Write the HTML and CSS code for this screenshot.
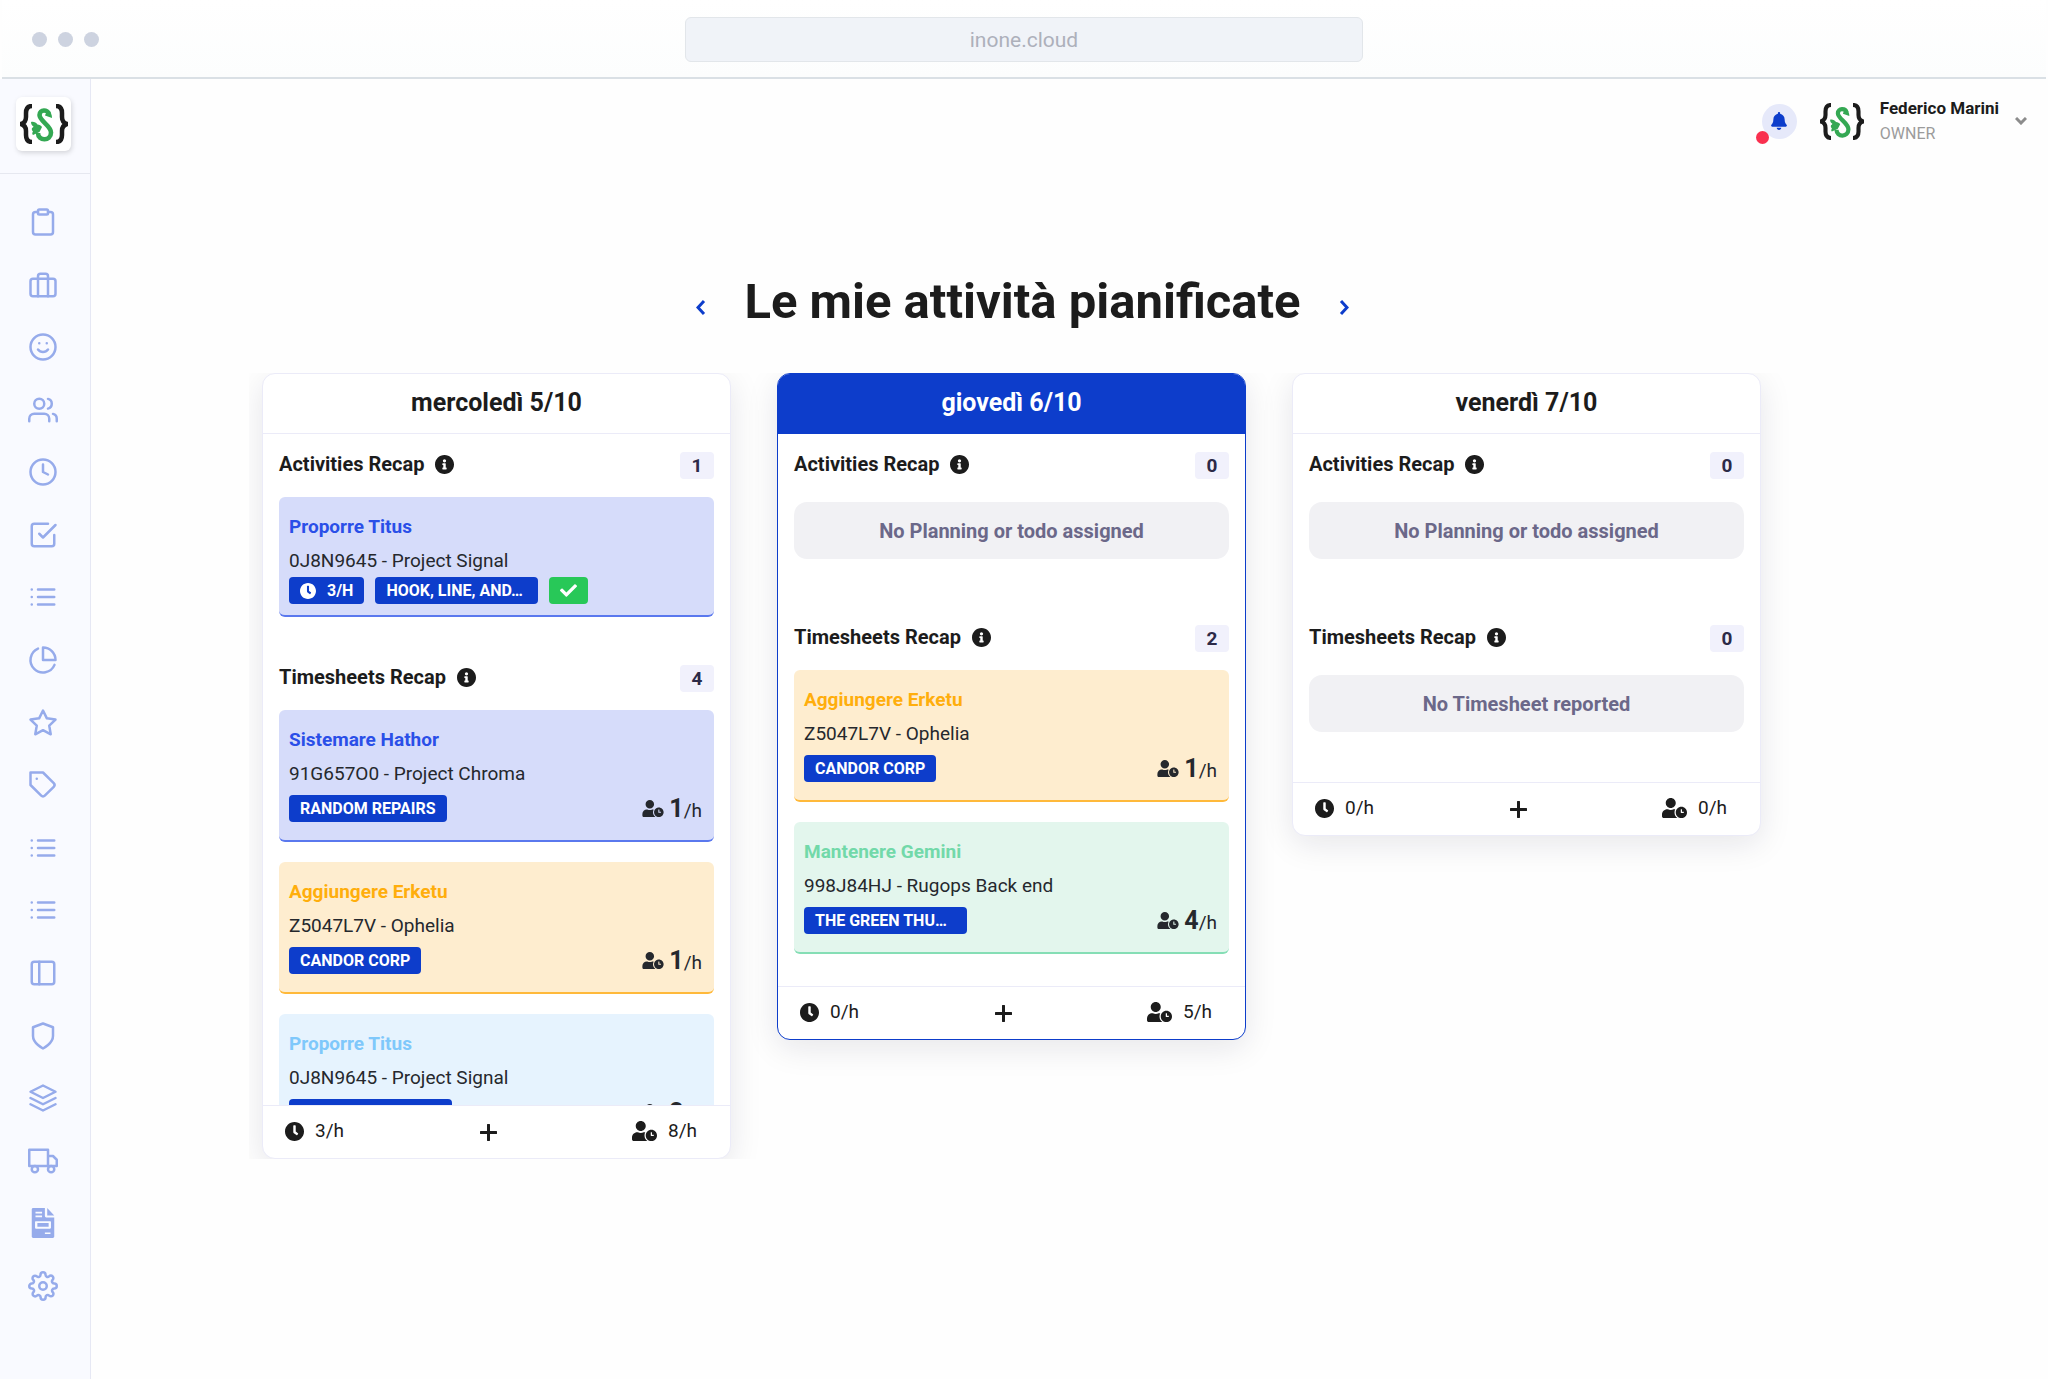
FILE: index.html
```html
<!DOCTYPE html>
<html lang="it">
<head>
    <meta charset="UTF-8">
    <meta name="viewport" content="width=device-width, initial-scale=1.0">
    <title>inone.cloud</title>
    <link rel="stylesheet" href="styles.css">
</head>
<body>
    <!-- Shared icons -->
    <svg class="sprite" aria-hidden="true">
        <symbol id="logo" viewBox="0 0 48 40">
            <g fill="none" stroke="#1c1c1c" stroke-width="4.500">
                <path d="M12 2C8 2 6 4.500 6 9v4c0 4-1.500 6-5 7 3.500 1 5 3 5 7v4c0 4.500 2 7 6 7"/>
                <path d="M36 2c4 0 6 2.500 6 7v4c0 4 1.500 6 5 7-3.500 1-5 3-5 7v4c0 4.500-2 7-6 7"/>
            </g>
            <path d="M29 10c-1-4.500-9.500-5-9.500 1 0 6 11.500 10.500 11.500 17.500 0 9-13 9-13 .5" fill="none" stroke="#34a853" stroke-width="4.600"/>
            <path d="M32 14l-7-2.500c.5-2 2-4 4-4.500 2 1.500 3 4 3 7zM11 18c3-.5 5 .5 6.500 2.500 2 0 3.500 1 4.500 2.500l-2.500 5-6.500 3c-1-1-1-2 0-3.500-1-1-1.500-2-1-3.500 1-.5 1.500-1 1.500-1.500C12 21.500 11 20 11 18z" fill="#34a853"/>
        </symbol>
        <symbol id="list" viewBox="0 0 24 24"><path d="M8 6h13M8 12h13M8 18h13M3 6h.01M3 12h.01M3 18h.01"/></symbol>
        <symbol id="info" viewBox="8 8 496 496"><path d="M256 8C119.043 8 8 119.083 8 256c0 136.997 111.043 248 248 248s248-111.003 248-248C504 119.083 392.957 8 256 8zm0 110c23.196 0 42 18.804 42 42s-18.804 42-42 42-42-18.804-42-42 18.804-42 42-42zm56 254c0 6.627-5.373 12-12 12h-88c-6.627 0-12-5.373-12-12v-24c0-6.627 5.373-12 12-12h12v-64h-12c-6.627 0-12-5.373-12-12v-24c0-6.627 5.373-12 12-12h64c6.627 0 12 5.373 12 12v100h12c6.627 0 12 5.373 12 12v24z"/></symbol>
        <symbol id="clock" viewBox="8 8 496 496"><path d="M256,8C119,8,8,119,8,256S119,504,256,504,504,393,504,256,393,8,256,8Zm92.490,313h0l-20,25a16,16,0,0,1-22.490,2.500h0l-67-49.720a40,40,0,0,1-15-31.230V112a16,16,0,0,1,16-16h32a16,16,0,0,1,16,16V256l58,42.500A16,16,0,0,1,348.490,321Z"/></symbol>
        <symbol id="user-clock" viewBox="0 0 640 512"><path d="M496 224c-79.600 0-144 64.400-144 144s64.400 144 144 144 144-64.400 144-144-64.400-144-144-144zm64 150.300c0 5.300-4.400 9.700-9.700 9.700h-60.600c-5.300 0-9.700-4.400-9.700-9.700v-76.600c0-5.300 4.400-9.700 9.700-9.700h12.600c5.300 0 9.700 4.400 9.700 9.700V352h38.300c5.300 0 9.700 4.400 9.700 9.700v12.600zM320 368c0-27.800 6.700-54.100 18.200-77.500-8-1.500-16.200-2.500-24.600-2.500h-16.700c-22.200 10.200-46.900 16-72.900 16s-50.600-5.800-72.900-16h-16.700C60.200 288 0 348.200 0 422.400V464c0 26.500 21.500 48 48 48h347.100c-45.300-31.900-75.100-84.500-75.100-144zm-96-112c70.700 0 128-57.300 128-128S294.700 0 224 0 96 57.300 96 128s57.300 128 128 128z"/></symbol>
        <symbol id="plus" viewBox="0 0 17 17"><path d="M8.500 1v15M1 8.500h15" stroke="currentColor" stroke-width="3" stroke-linecap="round"/></symbol>
    </svg>

    <div class="browser-bar">
        <div class="dots"><span></span><span></span><span></span></div>
        <input class="address" type="text" value="inone.cloud" aria-label="Address" readonly>
    </div>

    <div class="app">
        <aside class="sidebar">
            <div class="brand">
                <a href="#" class="brand-logo" aria-label="Home"><svg><use href="#logo"/></svg></a>
            </div>
            <nav class="menu">
                <a href="#" aria-label="Clipboard"><svg viewBox="0 0 24 24"><path d="M16 4h2a2 2 0 0 1 2 2v14a2 2 0 0 1-2 2H6a2 2 0 0 1-2-2V6a2 2 0 0 1 2-2h2"/><rect x="8" y="2" width="8" height="4" rx="1"/></svg></a>
                <a href="#" aria-label="Projects"><svg viewBox="0 0 24 24"><rect x="2" y="7" width="20" height="14" rx="2"/><path d="M16 21V5a2 2 0 0 0-2-2h-4a2 2 0 0 0-2 2v16"/></svg></a>
                <a href="#" aria-label="Customers"><svg viewBox="0 0 24 24"><circle cx="12" cy="12" r="10"/><path d="M8 14s1.500 2 4 2 4-2 4-2M9 9h.01M15 9h.01"/></svg></a>
                <a href="#" aria-label="Users"><svg viewBox="0 0 24 24"><path d="M17 21v-2a4 4 0 0 0-4-4H5a4 4 0 0 0-4 4v2"/><circle cx="9" cy="7" r="4"/><path d="M23 21v-2a4 4 0 0 0-3-3.870M16 3.130a4 4 0 0 1 0 7.750"/></svg></a>
                <a href="#" aria-label="Timesheets"><svg viewBox="0 0 24 24"><circle cx="12" cy="12" r="10"/><path d="M12 6v6l4 2"/></svg></a>
                <a href="#" aria-label="Todo"><svg viewBox="0 0 24 24"><path d="M9 11l3 3L22 4"/><path d="M21 12v7a2 2 0 0 1-2 2H5a2 2 0 0 1-2-2V5a2 2 0 0 1 2-2h11"/></svg></a>
                <a href="#" aria-label="List"><svg><use href="#list"/></svg></a>
                <a href="#" aria-label="Reports"><svg viewBox="0 0 24 24"><path d="M21.210 15.890A10 10 0 1 1 8 2.830"/><path d="M22 12A10 10 0 0 0 12 2v10z"/></svg></a>
                <a href="#" aria-label="Favourites"><svg viewBox="0 0 24 24"><path d="M12 2l3.090 6.260L22 9.270l-5 4.870 1.180 6.880L12 17.770l-6.180 3.250L7 14.140 2 9.270l6.910-1.010L12 2z"/></svg></a>
                <a href="#" aria-label="Tags"><svg viewBox="0 0 24 24"><path d="M20.590 13.410l-7.170 7.170a2 2 0 0 1-2.830 0L2 12V2h10l8.590 8.590a2 2 0 0 1 0 2.820zM7 7h.01"/></svg></a>
                <a href="#" aria-label="List"><svg><use href="#list"/></svg></a>
                <a href="#" aria-label="List"><svg><use href="#list"/></svg></a>
                <a href="#" aria-label="Board"><svg viewBox="0 0 24 24"><rect x="3" y="3" width="18" height="18" rx="2"/><path d="M9 3v18"/></svg></a>
                <a href="#" aria-label="Security"><svg viewBox="0 0 24 24"><path d="M12 22s8-4 8-10V5l-8-3-8 3v7c0 6 8 10 8 10z"/></svg></a>
                <a href="#" aria-label="Layers"><svg viewBox="0 0 24 24"><path d="M12 2L2 7l10 5 10-5-10-5zM2 17l10 5 10-5M2 12l10 5 10-5"/></svg></a>
                <a href="#" aria-label="Suppliers"><svg viewBox="0 0 24 24"><path d="M1 3h15v13H1zM16 8h4l3 3v5h-7z"/><circle cx="5.500" cy="18.500" r="2.500"/><circle cx="18.500" cy="18.500" r="2.500"/></svg></a>
                <a href="#" aria-label="Invoices"><svg class="solid" viewBox="0 0 384 512"><path fill-rule="evenodd" d="M24 0h200v136c0 13 11 24 24 24h136v328c0 13-11 24-24 24H24c-13 0-24-11-24-24V24C0 11 11 0 24 0zm40 64v28h112V64H64zm0 64v28h112v-28H64zm8 96c-9 0-16 7-16 16v96c0 9 7 16 16 16h240c9 0 16-7 16-16v-96c0-9-7-16-16-16H72zm24 32h192v64H96v-64zm128 160v28h96v-28h-96zM264 0l120 128H264z"/></svg></a>
                <a href="#" aria-label="Settings"><svg viewBox="0 0 24 24"><circle cx="12" cy="12" r="3"/><path d="M19.400 15a1.650 1.650 0 0 0 .33 1.820l.06.06a2 2 0 0 1 0 2.830 2 2 0 0 1-2.830 0l-.06-.06a1.650 1.650 0 0 0-1.820-.33 1.650 1.650 0 0 0-1 1.510V21a2 2 0 0 1-2 2 2 2 0 0 1-2-2v-.09A1.650 1.650 0 0 0 9 19.400a1.650 1.650 0 0 0-1.820.33l-.06.06a2 2 0 0 1-2.830 0 2 2 0 0 1 0-2.830l.06-.06a1.650 1.650 0 0 0 .33-1.820 1.650 1.650 0 0 0-1.510-1H3a2 2 0 0 1-2-2 2 2 0 0 1 2-2h.09A1.650 1.650 0 0 0 4.600 9a1.650 1.650 0 0 0-.33-1.820l-.06-.06a2 2 0 0 1 0-2.830 2 2 0 0 1 2.830 0l.06.06a1.650 1.650 0 0 0 1.820.33H9a1.650 1.650 0 0 0 1-1.510V3a2 2 0 0 1 2-2 2 2 0 0 1 2 2v.09a1.650 1.650 0 0 0 1 1.510 1.650 1.650 0 0 0 1.820-.33l.06-.06a2 2 0 0 1 2.830 0 2 2 0 0 1 0 2.830l-.06.06a1.650 1.650 0 0 0-.33 1.820V9a1.650 1.650 0 0 0 1.510 1H21a2 2 0 0 1 2 2 2 2 0 0 1-2 2h-.09a1.650 1.650 0 0 0-1.510 1z"/></svg></a>
            </nav>
        </aside>

        <main class="main">
            <header class="topbar">
                <button class="bell" aria-label="Notifications">
                    <svg viewBox="0 0 448 512"><path d="M224 512c35.320 0 63.970-28.650 63.970-64H160.030c0 35.350 28.650 64 63.970 64zm215.390-149.710c-19.320-20.760-55.470-51.990-55.470-154.290 0-77.700-54.480-139.900-127.940-155.160V32c0-17.670-14.320-32-31.980-32s-31.980 14.330-31.980 32v20.840C118.560 68.100 64.080 130.300 64.080 208c0 102.300-36.150 133.530-55.470 154.290-6 6.450-8.660 14.160-8.610 21.710.11 16.400 12.980 32 32.100 32h383.800c19.120 0 32-15.600 32.100-32 .05-7.550-2.610-15.270-8.610-21.710z"/></svg>
                    <span class="bell-dot"></span>
                </button>
                <button class="user">
                    <svg class="user-logo"><use href="#logo"/></svg>
                    <span class="user-text">
                        <span class="user-name">Federico Marini</span>
                        <span class="user-role">OWNER</span>
                    </span>
                    <svg class="user-arrow" viewBox="0 0 12 8"><path d="M1 1l5 5 5-5"/></svg>
                </button>
            </header>

            <div class="title">
                <button class="arrow" aria-label="Previous"><svg viewBox="0 0 10 17"><path d="M8 2L2 8.500 8 15"/></svg></button>
                <h1>Le mie attività pianificate</h1>
                <button class="arrow" aria-label="Next"><svg viewBox="0 0 10 17"><path d="M2 2l6 6.500L2 15"/></svg></button>
            </div>

            <div class="board">
                <!-- Wednesday -->
                <section class="day">
                    <h2>mercoledì 5/10</h2>
                    <div class="day-body">
                        <div class="recap">
                            <h3>Activities Recap</h3>
                            <svg><use href="#info"/></svg>
                            <span class="count">1</span>
                        </div>
                        <div class="card card-blue card-activity">
                            <h4>Proporre Titus</h4>
                            <p>0J8N9645 - Project Signal</p>
                            <div class="card-row">
                                <span class="badge"><svg><use href="#clock"/></svg>3/H</span>
                                <span class="badge badge-long">HOOK, LINE, AND…</span>
                                <span class="badge badge-done"><svg viewBox="0 0 512 512"><path d="M173.898 439.404l-166.400-166.400c-9.997-9.997-9.997-26.206 0-36.204l36.203-36.204c9.997-9.998 26.207-9.998 36.204 0L192 312.690 432.095 72.596c9.997-9.997 26.207-9.997 36.204 0l36.203 36.204c9.997 9.997 9.997 26.206 0 36.204l-294.400 294.401c-9.998 9.997-26.207 9.997-36.204-.001z"/></svg></span>
                            </div>
                        </div>
                        <div class="recap">
                            <h3>Timesheets Recap</h3>
                            <svg><use href="#info"/></svg>
                            <span class="count">4</span>
                        </div>
                        <div class="card card-blue">
                            <h4>Sistemare Hathor</h4>
                            <p>91G657O0 - Project Chroma</p>
                            <div class="card-row">
                                <span class="badge">RANDOM REPAIRS</span>
                                <span class="hours"><svg><use href="#user-clock"/></svg><b>1</b>/h</span>
                            </div>
                        </div>
                        <div class="card card-orange">
                            <h4>Aggiungere Erketu</h4>
                            <p>Z5047L7V - Ophelia</p>
                            <div class="card-row">
                                <span class="badge">CANDOR CORP</span>
                                <span class="hours"><svg><use href="#user-clock"/></svg><b>1</b>/h</span>
                            </div>
                        </div>
                        <div class="card card-sky">
                            <h4>Proporre Titus</h4>
                            <p>0J8N9645 - Project Signal</p>
                            <div class="card-row">
                                <span class="badge badge-long">HOOK, LINE, AND…</span>
                                <span class="hours"><svg><use href="#user-clock"/></svg><b>2</b>/h</span>
                            </div>
                        </div>
                    </div>
                    <footer class="day-footer">
                        <span class="total"><svg class="icon-clock"><use href="#clock"/></svg>3/h</span>
                        <button class="add" aria-label="Add"><svg><use href="#plus"/></svg></button>
                        <span class="total"><svg class="icon-user"><use href="#user-clock"/></svg>8/h</span>
                    </footer>
                </section>

                <!-- Thursday, current day -->
                <section class="day day-current">
                    <h2>giovedì 6/10</h2>
                    <div class="day-body">
                        <div class="recap">
                            <h3>Activities Recap</h3>
                            <svg><use href="#info"/></svg>
                            <span class="count">0</span>
                        </div>
                        <p class="empty">No Planning or todo assigned</p>
                        <div class="recap">
                            <h3>Timesheets Recap</h3>
                            <svg><use href="#info"/></svg>
                            <span class="count">2</span>
                        </div>
                        <div class="card card-orange">
                            <h4>Aggiungere Erketu</h4>
                            <p>Z5047L7V - Ophelia</p>
                            <div class="card-row">
                                <span class="badge">CANDOR CORP</span>
                                <span class="hours"><svg><use href="#user-clock"/></svg><b>1</b>/h</span>
                            </div>
                        </div>
                        <div class="card card-green">
                            <h4>Mantenere Gemini</h4>
                            <p>998J84HJ - Rugops Back end</p>
                            <div class="card-row">
                                <span class="badge badge-long">THE GREEN THU…</span>
                                <span class="hours"><svg><use href="#user-clock"/></svg><b>4</b>/h</span>
                            </div>
                        </div>
                    </div>
                    <footer class="day-footer">
                        <span class="total"><svg class="icon-clock"><use href="#clock"/></svg>0/h</span>
                        <button class="add" aria-label="Add"><svg><use href="#plus"/></svg></button>
                        <span class="total"><svg class="icon-user"><use href="#user-clock"/></svg>5/h</span>
                    </footer>
                </section>

                <!-- Friday -->
                <section class="day">
                    <h2>venerdì 7/10</h2>
                    <div class="day-body">
                        <div class="recap">
                            <h3>Activities Recap</h3>
                            <svg><use href="#info"/></svg>
                            <span class="count">0</span>
                        </div>
                        <p class="empty">No Planning or todo assigned</p>
                        <div class="recap">
                            <h3>Timesheets Recap</h3>
                            <svg><use href="#info"/></svg>
                            <span class="count">0</span>
                        </div>
                        <p class="empty">No Timesheet reported</p>
                    </div>
                    <footer class="day-footer">
                        <span class="total"><svg class="icon-clock"><use href="#clock"/></svg>0/h</span>
                        <button class="add" aria-label="Add"><svg><use href="#plus"/></svg></button>
                        <span class="total"><svg class="icon-user"><use href="#user-clock"/></svg>0/h</span>
                    </footer>
                </section>
            </div>
        </main>
    </div>
</body>
</html>
```
FILE: styles.css
```css
* {
    margin: 0;
    padding: 0;
    box-sizing: border-box;
}

body {
    font-family: Roboto, 'Liberation Sans', sans-serif;
    font-size: 19px;
    line-height: 28px;
    color: #1c1c1c;
    background: #fefefe;
    display: flex;
    flex-direction: column;
    min-height: 100vh;
}

svg {
    display: block;
    flex: none;
    fill: currentColor;
}

button {
    border: none;
    background: none;
    font: inherit;
    color: inherit;
    cursor: pointer;
}

.sprite {
    position: absolute;
    width: 0;
    height: 0;
}

/* Browser frame */
.browser-bar {
    display: grid;
    grid-template-columns: 1fr 678px 1fr;
    align-items: center;
    margin: 0 2px;
    padding: 17px 30px 15px;
    border-bottom: 2px solid #dae0e5;
    background: linear-gradient(#fff, #fcfdfd);
}

.dots {
    display: flex;
    gap: 11px;
}

.dots span {
    width: 15px;
    height: 15px;
    border-radius: 50%;
    background: #cdd3e0;
}

.address {
    height: 45px;
    border: 1px solid #e2e6ea;
    border-radius: 6px;
    background: #f0f3f8;
    color: #adb0bb;
    font: 21px Roboto, 'Liberation Sans', sans-serif;
    text-align: center;
}

.app {
    display: flex;
    flex: 1;
}

/* Sidebar */
.sidebar {
    display: flex;
    flex-direction: column;
    flex: none;
    width: 91px;
    background: #f9faff;
    border-right: 1px solid #e6e8f4;
}

.brand {
    padding: 18px 16px 22px;
    border-bottom: 1px solid #e6e8f0;
}

.brand-logo {
    display: flex;
    align-items: center;
    justify-content: center;
    width: 55px;
    height: 54px;
    border-radius: 6px;
    background: #fff;
    box-shadow: 1px 2px 5px rgba(0, 0, 0, 0.15);
}

.brand-logo svg {
    width: 48px;
    height: 40px;
}

.menu {
    display: flex;
    flex-direction: column;
    justify-content: space-between;
    flex: 1;
    padding: 33px 0 78px 28px;
    color: #96abeb;
}

.menu a {
    color: inherit;
}

.menu svg {
    width: 30px;
    height: 30px;
    fill: none;
    stroke: currentColor;
    stroke-width: 2;
    stroke-linecap: round;
    stroke-linejoin: round;
}

.menu .solid {
    fill: currentColor;
    stroke: none;
}

/* Top bar */
.main {
    flex: 1;
    min-width: 0;
}

.topbar {
    display: flex;
    align-items: center;
    justify-content: flex-end;
    gap: 23px;
    height: 84px;
    padding-right: 21px;
}

.bell {
    position: relative;
    display: flex;
    align-items: center;
    justify-content: center;
    width: 35px;
    height: 35px;
    border-radius: 50%;
    background: #e6e9fa;
    color: #0d3dcb;
}

.bell svg {
    width: 16px;
    height: 18px;
}

.bell-dot {
    position: absolute;
    left: -6px;
    bottom: -5px;
    width: 13px;
    height: 13px;
    border-radius: 50%;
    background: #f9304f;
}

.user {
    display: flex;
    align-items: center;
    text-align: left;
}

.user-logo {
    width: 44px;
    height: 37px;
}

.user-text {
    display: flex;
    flex-direction: column;
    margin: 0 16px;
    font-size: 17px;
    line-height: 25px;
}

.user-name {
    font-weight: 700;
}

.user-role {
    color: #9b9b9b;
    font-size: 16px;
}

.user-arrow {
    width: 12px;
    height: 8px;
    fill: none;
    stroke: #8c8c8c;
    stroke-width: 3;
}

/* Title */
.title {
    display: flex;
    align-items: center;
    justify-content: center;
    gap: 38px;
    margin: 111px 94px 43px 0;
}

.title h1 {
    font-size: 49px;
    line-height: 56px;
}

.arrow {
    padding-top: 10px;
}

.arrow svg {
    width: 10px;
    height: 17px;
    fill: none;
    stroke: #0d3dcb;
    stroke-width: 3;
}

/* Board */
.board {
    display: grid;
    grid-template-columns: repeat(3, 1fr);
    align-items: start;
    gap: 46px;
    margin-left: 158px;
    padding: 0 287px 0 13px;
    overflow: hidden;
}

.day {
    display: flex;
    flex-direction: column;
    max-height: 57vh;
    border: 1px solid #ebebf8;
    border-radius: 13px;
    background: #fff;
    box-shadow: 0 8px 32px rgba(20, 20, 50, 0.1);
    overflow: hidden;
}

.day h2 {
    flex: none;
    padding: 15px 0 16px;
    border-bottom: 1px solid #ebebf8;
    font-size: 25px;
    text-align: center;
}

.day-current {
    border-color: #0d3dcb;
}

.day-current h2 {
    border-color: #0d3dcb;
    background: #0d3dcb;
    color: #fff;
}

.day-body {
    flex: 1;
    padding: 18px 16px 12px;
    overflow: hidden;
}

.recap {
    display: flex;
    align-items: flex-start;
    margin-bottom: 18px;
    line-height: 25px;
}

.recap h3 {
    font-size: 20px;
}

.recap svg {
    width: 19px;
    height: 19px;
    margin: 3px 0 0 11px;
}

.count {
    width: 34px;
    margin-left: auto;
    border-radius: 4px;
    background: #f1f1fc;
    color: #2c2a48;
    font-weight: 700;
    line-height: 27px;
    text-align: center;
}

.empty {
    margin: 23px 0 66px;
    padding: 15px 14px 14px;
    border-radius: 13px;
    background: #f1f1f4;
    color: #6b6889;
    font-size: 20px;
    font-weight: 700;
    text-align: center;
}

.empty:last-child {
    margin-bottom: 38px;
}

/* Cards */
.card {
    margin-bottom: 20px;
    padding: 16px 12px 18px 10px;
    border-bottom: 2px solid;
    border-radius: 6px;
}

.card h4 {
    margin-bottom: 6px;
    font-size: 19px;
}

.card p,
.hours {
    color: #25282d;
}

.card-row {
    display: flex;
    justify-content: space-between;
    height: 27px;
    margin-top: 7px;
    line-height: 27px;
}

.card-activity {
    margin-bottom: 48px;
    padding-bottom: 11px;
}

.card-activity .card-row {
    justify-content: flex-start;
    gap: 11px;
    margin-top: 2px;
}

.card-blue {
    background: #d6dcfa;
    border-color: #5a78ee;
    color: #2a4fe8;
}

.card-orange {
    background: #feedcf;
    border-color: #ffb93a;
    color: #ffae0c;
}

.card-sky {
    background: #e6f3fe;
    color: #7fc8fb;
}

.card-green {
    background: #e3f6ed;
    border-color: #85deb5;
    color: #72d9a9;
}

.badge {
    display: flex;
    align-items: center;
    gap: 11px;
    height: 27px;
    padding: 0 11px;
    border-radius: 4px;
    background: #0d3dcb;
    color: #fff;
    font-size: 16px;
    font-weight: 700;
}

.badge svg {
    width: 16px;
    height: 16px;
}

.badge-long {
    width: 163px;
}

.badge-done {
    background: #28c858;
}

.badge-done svg {
    width: 17px;
    height: 17px;
}

.hours {
    display: flex;
    align-items: baseline;
}

.hours svg {
    width: 22px;
    height: 17px;
    margin: 0 5px -2px 0;
}

.hours b {
    font-size: 25px;
}

/* Day footer */
.day-footer {
    display: flex;
    align-items: center;
    justify-content: space-between;
    flex: none;
    padding: 11px 33px 13px 22px;
    border-top: 1px solid #ebebf8;
}

.total {
    display: flex;
    align-items: center;
    gap: 11px;
}

.icon-clock {
    width: 19px;
    height: 19px;
}

.icon-user {
    width: 25px;
    height: 20px;
}

.add {
    padding-top: 2px;
}

.add svg {
    width: 17px;
    height: 17px;
}
```
